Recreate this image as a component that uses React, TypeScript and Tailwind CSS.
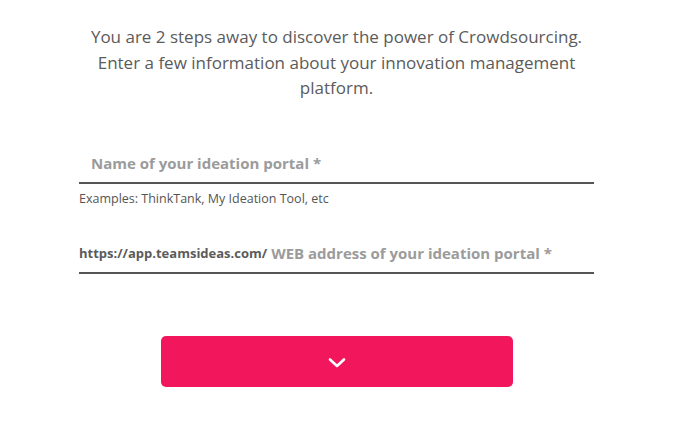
import React from "react";

export default function App() {
  return (
    <div className="w-[688px] h-[434px] bg-white overflow-hidden" style={{ fontFamily: '"Open Sans", "Noto Sans", sans-serif' }}>
      <div className="ml-[79px] w-[515px] flex flex-col">
        <p className="pt-[24px] text-center text-[17px] leading-[25.5px] text-[#5b5b5b]">
          <span className="block">You are 2 steps away to discover the power of Crowdsourcing.</span>
          <span className="block">Enter a few information about your innovation management</span>
          <span className="block">platform.</span>
        </p>

        <div className="mt-[49px] h-[34px] pb-[4px] border-b-2 border-[#555555] flex items-center px-[12px]">
          <span className="text-[15px] font-bold text-[#9b9b9b]">Name of your ideation portal *</span>
        </div>
        <div className="mt-[7px] text-[12.5px] text-[#555555] leading-[16px]">Examples: ThinkTank, My Ideation Tool, etc</div>

        <div className="mt-[31px] h-[36px] pb-[2px] border-b-2 border-[#555555] flex items-center gap-[4px]">
          <span className="text-[13px] font-bold text-[#5b5b5b]">https://app.teamsideas.com/</span>
          <span className="text-[15px] font-bold text-[#9b9b9b]">WEB address of your ideation portal *</span>
        </div>
      </div>

      <div className="mt-[62px] ml-[161px] w-[352px] h-[51px] rounded-[5px] bg-[#f2175d] flex items-center justify-center">
        <svg className="mt-[3px]" width="18" height="12" viewBox="0 0 18 12" fill="none">
          <path d="M2 2.5 L9 9 L16 2.5" stroke="white" strokeWidth="2.6" strokeLinecap="round" strokeLinejoin="round" />
        </svg>
      </div>
    </div>
  );
}
